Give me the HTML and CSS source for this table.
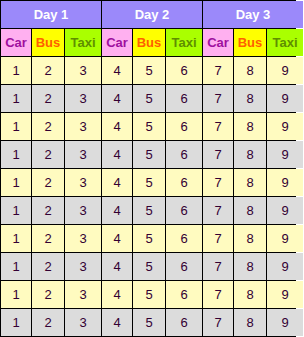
FILE: index.html
```html
<!DOCTYPE html>
<html>
<head>
<meta charset="utf-8">
<link rel="stylesheet" href="styles.css">
</head>
<body>
<div class="grid">
  <div class="cell day">Day 1</div>
  <div class="cell day">Day 2</div>
  <div class="cell day">Day 3</div>

  <div class="cell car">Car</div><div class="cell bus">Bus</div><div class="cell taxi">Taxi</div>
  <div class="cell car">Car</div><div class="cell bus">Bus</div><div class="cell taxi">Taxi</div>
  <div class="cell car">Car</div><div class="cell bus">Bus</div><div class="cell taxi">Taxi</div>

  <div class="cell odd">1</div><div class="cell odd">2</div><div class="cell odd">3</div><div class="cell odd">4</div><div class="cell odd">5</div><div class="cell odd">6</div><div class="cell odd">7</div><div class="cell odd">8</div><div class="cell odd">9</div>
  <div class="cell even">1</div><div class="cell even">2</div><div class="cell even">3</div><div class="cell even">4</div><div class="cell even">5</div><div class="cell even">6</div><div class="cell even">7</div><div class="cell even">8</div><div class="cell even">9</div>
  <div class="cell odd">1</div><div class="cell odd">2</div><div class="cell odd">3</div><div class="cell odd">4</div><div class="cell odd">5</div><div class="cell odd">6</div><div class="cell odd">7</div><div class="cell odd">8</div><div class="cell odd">9</div>
  <div class="cell even">1</div><div class="cell even">2</div><div class="cell even">3</div><div class="cell even">4</div><div class="cell even">5</div><div class="cell even">6</div><div class="cell even">7</div><div class="cell even">8</div><div class="cell even">9</div>
  <div class="cell odd">1</div><div class="cell odd">2</div><div class="cell odd">3</div><div class="cell odd">4</div><div class="cell odd">5</div><div class="cell odd">6</div><div class="cell odd">7</div><div class="cell odd">8</div><div class="cell odd">9</div>
  <div class="cell even">1</div><div class="cell even">2</div><div class="cell even">3</div><div class="cell even">4</div><div class="cell even">5</div><div class="cell even">6</div><div class="cell even">7</div><div class="cell even">8</div><div class="cell even">9</div>
  <div class="cell odd">1</div><div class="cell odd">2</div><div class="cell odd">3</div><div class="cell odd">4</div><div class="cell odd">5</div><div class="cell odd">6</div><div class="cell odd">7</div><div class="cell odd">8</div><div class="cell odd">9</div>
  <div class="cell even">1</div><div class="cell even">2</div><div class="cell even">3</div><div class="cell even">4</div><div class="cell even">5</div><div class="cell even">6</div><div class="cell even">7</div><div class="cell even">8</div><div class="cell even">9</div>
  <div class="cell odd">1</div><div class="cell odd">2</div><div class="cell odd">3</div><div class="cell odd">4</div><div class="cell odd">5</div><div class="cell odd">6</div><div class="cell odd">7</div><div class="cell odd">8</div><div class="cell odd">9</div>
  <div class="cell even">1</div><div class="cell even">2</div><div class="cell even">3</div><div class="cell even">4</div><div class="cell even">5</div><div class="cell even">6</div><div class="cell even">7</div><div class="cell even">8</div><div class="cell even">9</div>
</div>
</body>
</html>
```

FILE: styles.css
```css
html, body {
  margin: 0;
  padding: 0;
  background: #ffffff;
}

.grid {
  display: grid;
  grid-template-columns: 30px 32px 36px 30px 32px 36px 30px 32px 36px;
  grid-auto-rows: 27px;
  gap: 1px;
  padding: 1px;
  background: #000000;
  width: 294px;
  font-family: "Liberation Sans", Arial, sans-serif;
  font-size: 13px;
}

.cell {
  display: flex;
  align-items: center;
  justify-content: center;
  color: #330033;
}

.day {
  grid-column: span 3;
  background: #9b89fa;
  color: #ffffff;
  font-weight: bold;
}

.car {
  background: #ffb0f0;
  color: #a0109f;
  font-weight: bold;
}

.bus {
  background: #ffff00;
  color: #ff6000;
  font-weight: bold;
}

.taxi {
  background: #aaff00;
  color: #5f8f00;
  font-weight: bold;
}

.odd {
  background: #fffbc0;
}

.even {
  background: #dcdcdc;
}
```
